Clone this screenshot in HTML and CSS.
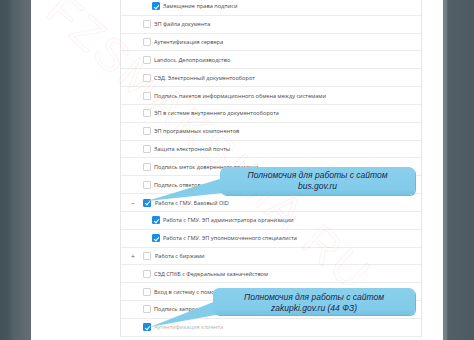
FILE: index.html
```html
<!DOCTYPE html>
<html lang="ru">
<head>
<meta charset="utf-8">
<title>Полномочия</title>
<link rel="stylesheet" href="styles.css">
</head>
<body>
<div class="page">
  <div class="side side-left"></div>
  <main class="main">
    <div class="watermark">FZSMAKSIMA.RU</div>
    <ul class="tree">
      <li class="row l2"><span class="tg"></span><span class="cb on"></span><span class="lbl">Замещение права подписи</span></li>
      <li class="row"><span class="tg"></span><span class="cb"></span><span class="lbl">ЭП файла документа</span></li>
      <li class="row"><span class="tg"></span><span class="cb"></span><span class="lbl">Аутентификация сервера</span></li>
      <li class="row"><span class="tg"></span><span class="cb"></span><span class="lbl">Landocs. Делопроизводство</span></li>
      <li class="row"><span class="tg"></span><span class="cb"></span><span class="lbl">СЭД. Электронный документооборот</span></li>
      <li class="row"><span class="tg"></span><span class="cb"></span><span class="lbl">Подпись пакетов информационного обмена между системами</span></li>
      <li class="row"><span class="tg"></span><span class="cb"></span><span class="lbl">ЭП в системе внутреннего документооборота</span></li>
      <li class="row"><span class="tg"></span><span class="cb"></span><span class="lbl">ЭП программных компонентов</span></li>
      <li class="row"><span class="tg"></span><span class="cb"></span><span class="lbl">Защита электронной почты</span></li>
      <li class="row"><span class="tg"></span><span class="cb"></span><span class="lbl">Подпись меток доверенного времени</span></li>
      <li class="row"><span class="tg"></span><span class="cb"></span><span class="lbl">Подпись ответов службы OCSP</span></li>
      <li class="row group"><span class="tg">–</span><span class="cb on"></span><span class="lbl">Работа с ГМУ. Базовый OID</span></li>
      <li class="row l2"><span class="tg"></span><span class="cb on"></span><span class="lbl">Работа с ГМУ. ЭП администратора организации</span></li>
      <li class="row l2"><span class="tg"></span><span class="cb on"></span><span class="lbl">Работа с ГМУ. ЭП уполномоченного специалиста</span></li>
      <li class="row group"><span class="tg">+</span><span class="cb"></span><span class="lbl">Работа с биржами</span></li>
      <li class="row"><span class="tg"></span><span class="cb"></span><span class="lbl">СЭД СПбБ с Федеральным казначейством</span></li>
      <li class="row"><span class="tg"></span><span class="cb"></span><span class="lbl">Вход в систему с помощью сертификата</span></li>
      <li class="row"><span class="tg"></span><span class="cb"></span><span class="lbl">Подпись запросов на сертификат</span></li>
      <li class="row muted"><span class="tg"></span><span class="cb on"></span><span class="lbl">Аутентификация клиента</span></li>
    </ul>
    <svg class="tails" width="412" height="340" viewBox="0 0 412 340">
      <polygon points="116,201 192,178 192,193" fill="#84cdea"/>
      <polygon points="119,327 190,299 190,314" fill="#84cdea"/>
    </svg>
    <div class="callout c1">Полномочия для работы с сайтом<br>bus.gov.ru</div>
    <div class="callout c2">Полномочия для работы с сайтом<br>zakupki.gov.ru (44 ФЗ)</div>
  </main>
  <div class="side side-right"></div>
</div>
</body>
</html>
```

FILE: styles.css
```css
* { box-sizing: border-box; }
html, body { margin: 0; padding: 0; background: #fff; }
body { width: 474px; height: 340px; overflow: hidden; }

.page {
  display: flex;
  width: 474px;
  height: 340px;
}

.side { flex: 0 0 31px; height: 100%; }
.side-left {
  background: linear-gradient(90deg, #435159 0, #46545c 25%, #54626a 45%, #5c686e 70%, #647076 100%);
}
.side-right {
  background: linear-gradient(90deg, #76828a 0, #76828a 3px, #525f66 5px, #4d5a61 100%);
}

.main {
  position: relative;
  flex: 1;
  height: 100%;
  background: #fff;
  overflow: hidden;
}

.watermark {
  position: absolute;
  left: 40px;
  top: -16px;
  font-family: "Liberation Sans", Arial, sans-serif;
  font-size: 46px;
  line-height: 50px;
  letter-spacing: 3px;
  color: transparent;
  -webkit-text-stroke: 1px rgba(232, 120, 120, 0.11);
  transform: rotate(42deg);
  transform-origin: 0 0;
  white-space: nowrap;
  pointer-events: none;
}

.tree {
  list-style: none;
  margin: -2px 0 0 89px;
  padding: 0;
  width: 302px;
  border-left: 1px solid #e6e6e6;
  border-right: 1px solid #e6e6e6;
  font-family: "Open Sans", "Noto Sans", sans-serif;
  font-size: 5.6px;
  color: #454545;
}

.row {
  display: flex;
  align-items: center;
  height: 17.83px;
  border-bottom: 1px solid #ececec;
  padding-left: 10px;
}
.row.l2 { padding-left: 19px; }

.tg {
  flex: 0 0 12px;
  font-size: 7px;
  color: #666;
  line-height: 1;
}

.cb {
  flex: 0 0 8px;
  width: 8px;
  height: 8px;
  border: 1px solid #d3d3d3;
  border-radius: 1px;
  background: #fff;
  margin-right: 3px;
  position: relative;
}
.row.group .cb { margin-right: 4px; }
.cb.on {
  border-color: #1c8ee0;
  background: #1c8ee0;
}
.cb.on::after {
  content: "";
  position: absolute;
  left: 2px;
  top: 0.5px;
  width: 2px;
  height: 4px;
  border: solid #fff;
  border-width: 0 1.3px 1.3px 0;
  transform: rotate(40deg);
}

.lbl { white-space: nowrap; }
.row.muted .lbl { color: #b4b4b4; }

.tails {
  position: absolute;
  left: 0;
  top: 0;
}

.callout {
  position: absolute;
  background: linear-gradient(180deg, #8ad0ec 0, #82cbe9 80%, #74c2e3 100%);
  border-radius: 6px;
  box-shadow: 1px 1px 0 #6cb8da;
  font-family: "Liberation Sans", Arial, sans-serif;
  font-style: italic;
  font-size: 8.5px;
  line-height: 11px;
  color: #1b2a4a;
  text-align: center;
  display: flex;
  flex-direction: column;
  justify-content: center;
}
.c1 { left: 189px; top: 167px; width: 195px; height: 28px; }
.c2 { left: 182px; top: 288px; width: 202px; height: 27px; padding-top: 2px; }
```
